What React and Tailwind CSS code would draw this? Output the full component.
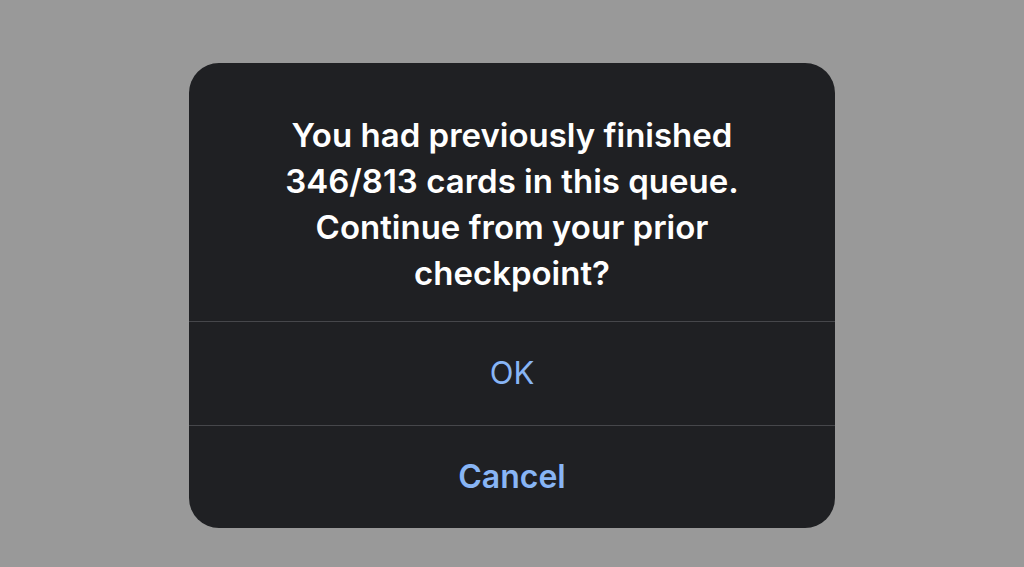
export default function App() {
  return (
    <div
      className="min-h-screen w-full bg-[#999999] flex justify-center pt-[63px]"
      style={{ fontFamily: 'Inter, "Noto Sans", sans-serif' }}
    >
      <div className="w-[646px] h-[465px] bg-[#1f2023] rounded-[30px] flex flex-col overflow-hidden">
        <div className="h-[258px] pt-[49px] text-center text-white text-[33px] font-semibold leading-[46px]">
          <p>You had previously finished</p>
          <p>346/813 cards in this queue.</p>
          <p>Continue from your prior</p>
          <p>checkpoint?</p>
        </div>
        <div className="h-px bg-[#46474b]" />
        <button className="h-[103px] flex items-center justify-center text-[31px] font-normal text-[#88b5f5]">
          OK
        </button>
        <div className="h-px bg-[#46474b]" />
        <button className="flex-1 flex items-center justify-center text-[32px] font-semibold text-[#88b5f5]">
          Cancel
        </button>
      </div>
    </div>
  );
}
